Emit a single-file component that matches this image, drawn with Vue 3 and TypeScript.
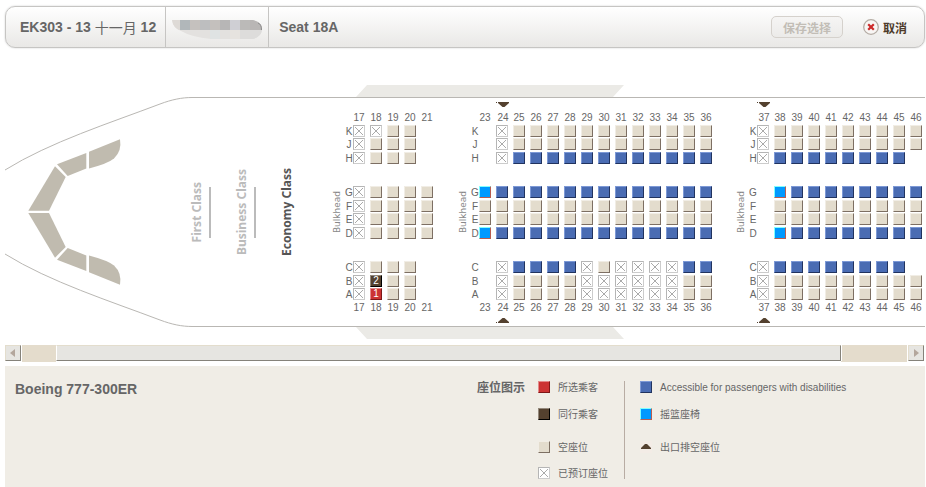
<script setup lang="ts">
import { ref } from 'vue'

type SeatKind = 'free' | 'booked' | 'accessible' | 'bassinet' | 'selected' | 'companion'

interface Deck {
  name: string
  first: number
  exits: number[]
  rows: Record<string, string>
}

const letters = ['K', 'J', 'H', '', 'G', 'F', 'E', 'D', '', 'C', 'B', 'A']

const decks: Deck[] = [
  {
    name: 'forward',
    first: 17,
    exits: [],
    rows: {
      K: 'xxoo.', J: 'xooo.', H: 'xooo.',
      G: 'xoooo', F: 'xoooo', E: 'xoooo', D: 'xoooo',
      C: 'xooo.', B: 'x2oo.', A: 'x1oo.',
    },
  },
  {
    name: 'middle',
    first: 23,
    exits: [24],
    rows: {
      K: '.xoooooooooooo', J: '.xoooooooooooo', H: '.xdddddddddddd',
      G: 'bddddddddddddd', F: 'oooooooooooooo', E: 'oooooooooooooo', D: 'bddddddddddddd',
      C: '.xddddxoxxxxdd', B: '.xooooxxxxxxoo', A: '.xooooxxxxxxoo',
    },
  },
  {
    name: 'aft',
    first: 37,
    exits: [37],
    rows: {
      K: 'xooooooooo', J: 'xooooooooo', H: 'xdddddddd.',
      G: '.bdddddddd', F: '.ooooooooo', E: '.ooooooooo', D: '.bdddddddd',
      C: 'xdddddddd.', B: 'xooooooooo', A: 'xooooooooo',
    },
  },
]

const kinds: Record<string, SeatKind> = {
  o: 'free', x: 'booked', d: 'accessible', b: 'bassinet', '1': 'selected', '2': 'companion',
}

function columns(deck: Deck) {
  return Array.from(deck.rows.K, (_, i) => ({
    number: deck.first + i,
    exit: deck.exits.includes(deck.first + i),
    seats: letters.map((letter) => {
      const code = letter ? deck.rows[letter][i] : '.'
      return { letter, kind: kinds[code], mark: code === '1' || code === '2' ? code : '' }
    }),
  }))
}

const plan = decks.map((deck) => ({ name: deck.name, columns: columns(deck) }))
const cabins = ['First Class', 'Business Class', 'Economy Class']
const cabin = ref('Economy Class')

const legend: { kind: SeatKind | 'exit'; text: string }[][] = [
  [
    { kind: 'selected', text: '所选乘客' },
    { kind: 'companion', text: '同行乘客' },
    { kind: 'free', text: '空座位' },
    { kind: 'booked', text: '已预订座位' },
  ],
  [
    { kind: 'accessible', text: 'Accessible for passengers with disabilities' },
    { kind: 'bassinet', text: '摇篮座椅' },
    { kind: 'exit', text: '出口排空座位' },
  ],
]
</script>

<template>
  <main class="page">
    <header class="bar">
      <div class="cell flight">EK303 - 13 <span class="month">十一月</span> 12</div>
      <div class="cell passenger">
        <svg width="92" height="22" viewBox="0 0 92 22" aria-hidden="true">
          <defs>
            <clipPath id="smudge">
              <path d="M1 1H82Q91 3 91 11Q90 18 82 20H40Q20 18 10 12Q2 9 1 1Z" />
            </clipPath>
          </defs>
          <g clip-path="url(#smudge)">
            <rect width="92" height="22" fill="#e3e1df" />
            <rect x="0" y="1" width="9" height="10" fill="#dedad6" />
            <rect x="9" y="1" width="10" height="10" fill="#b1b7ba" />
            <rect x="19" y="1" width="10" height="10" fill="#c5c1be" />
            <rect x="29" y="1" width="10" height="10" fill="#bdbebf" />
            <rect x="39" y="1" width="10" height="10" fill="#c4c0bd" />
            <rect x="49" y="1" width="10" height="10" fill="#b7b6b6" />
            <rect x="59" y="1" width="10" height="10" fill="#cfcfd4" />
            <rect x="69" y="1" width="10" height="10" fill="#bbbab8" />
            <rect x="79" y="1" width="13" height="10" fill="#b9b6b5" />
            <rect x="39" y="11" width="10" height="9" fill="#dfe3e3" />
            <rect x="59" y="11" width="10" height="9" fill="#e6e3df" />
            <rect x="69" y="11" width="22" height="9" fill="#dddcdb" />
          </g>
          <path d="M87 4Q90.500 5 90.500 11" fill="none" stroke="#8b8b8b" />
        </svg>
      </div>
      <div class="cell seat-name">Seat 18A</div>
      <div class="actions">
        <button class="save" type="button" disabled>保存选择</button>
        <button class="cancel" type="button">
          <svg width="16" height="16" viewBox="0 0 16 16" aria-hidden="true">
            <circle cx="8" cy="8" r="7.300" fill="#f8f6f4" stroke="#b5aca4" stroke-width="1.300" />
            <path d="M5.200 5.200L10.800 10.800M10.800 5.200L5.200 10.800" stroke="#cc2a2a" stroke-width="2.200" />
          </svg>
          取消
        </button>
      </div>
    </header>

    <section class="aircraft" aria-label="Seat map">
      <svg class="hull" aria-hidden="true">
        <path d="M362 0H619L608 12H351ZM351 242H608L619 254H362Z" fill="#ebeae6" />
        <path
          d="M0 85C45 57 105 38 155 19C167 14.500 177 12.500 187 12.500H4000M0 169C45 197 105 216 155 235C167 239.500 177 241.500 187 241.500H4000"
          fill="none"
          stroke="#b9b7b3"
        />
        <g fill="#c0bbaf">
          <path d="M50 81.300L60.700 92L44 125.700H23.300Z" />
          <path d="M52 79.300L81.300 68V83.500L62.700 91Z" />
          <path d="M84 66.700L115 54.300Q117 66 109 73.500Q103 78.500 84 83.500Z" />
          <path d="M50 172.700L60.700 162L44 128H23.300Z" />
          <path d="M52 174.700L81.300 186V170.500L62.700 163Z" />
          <path d="M84 187.300L115 199.700Q117 188 109 180.500Q103 175.500 84 170.500Z" />
        </g>
      </svg>

      <nav class="cabins">
        <template v-for="(name, i) in cabins" :key="name">
          <a href="#" :class="{ current: name === cabin }" @click.prevent="cabin = name">{{ name }}</a>
          <span v-if="i < cabins.length - 1" class="rule"></span>
        </template>
      </nav>

      <div v-for="deck in plan" :key="deck.name" class="deck" :class="deck.name">
        <span class="bulkhead">Bulkhead</span>
        <div class="column letters">
          <span></span><span></span>
          <span v-for="(letter, i) in letters" :key="i" class="letter">{{ letter }}</span>
        </div>
        <div v-for="column in deck.columns" :key="column.number" class="column">
          <span class="exit-slot">
            <svg v-if="column.exit" width="14" height="6" viewBox="0 0 14 6" aria-hidden="true">
              <path d="M2 0H13V1L8.500 5H6.500L2 1ZM0 0H1V1H0Z" fill="#54412f" />
            </svg>
          </span>
          <span class="number">{{ column.number }}</span>
          <template v-for="(seat, i) in column.seats" :key="i">
            <button
              v-if="seat.kind"
              type="button"
              class="seat"
              :class="seat.kind"
              :disabled="seat.kind === 'booked'"
              :aria-label="`${column.number}${seat.letter}`"
            >{{ seat.mark }}<svg v-if="seat.kind === 'booked'" width="10" height="10" viewBox="0 0 10 10"><path d="M1 1L9 9M9 1L1 9" stroke="#aaa" /></svg></button>
            <span v-else></span>
          </template>
          <span class="number">{{ column.number }}</span>
          <span class="exit-slot">
            <svg v-if="column.exit" width="14" height="6" viewBox="0 0 14 6" aria-hidden="true">
              <path d="M2 6H13V5L8.500 1H6.500L2 5ZM0 5H1V6H0Z" fill="#54412f" />
            </svg>
          </span>
        </div>
      </div>
    </section>

    <div class="scrollbar">
      <button type="button" aria-label="Scroll left">
        <svg width="6" height="8" viewBox="0 0 6 8"><path d="M5 0V8L0 4Z" fill="#b3a69c" /></svg>
      </button>
      <div class="track"><div class="thumb"></div></div>
      <button type="button" aria-label="Scroll right">
        <svg width="6" height="8" viewBox="0 0 6 8"><path d="M1 0V8L6 4Z" fill="#b3a69c" /></svg>
      </button>
    </div>

    <footer class="info">
      <h1>Boeing 777-300ER</h1>
      <div class="legend">
        <h2>座位图示</h2>
        <ul v-for="(group, g) in legend" :key="g">
          <li v-for="item in group" :key="item.text">
            <svg v-if="item.kind === 'exit'" class="exit" width="12" height="12" viewBox="0 0 12 12">
              <path d="M1 8V7L5 3H7L11 7V8Z" fill="#54412f" />
            </svg>
            <span v-else class="seat" :class="item.kind">
              <svg v-if="item.kind === 'booked'" width="10" height="10" viewBox="0 0 10 10"><path d="M1 1L9 9M9 1L1 9" stroke="#aaa" /></svg>
            </span>
            {{ item.text }}
          </li>
        </ul>
      </div>
    </footer>
  </main>
</template>

<style>
body {
  background: #fff;
}
</style>

<style scoped>
.page {
  padding: 6px 1px 0 5px;
  font-family: 'Liberation Sans', 'Noto Sans CJK SC', sans-serif;
  color: #666;
}

button {
  margin: 0;
  padding: 0;
  font-family: inherit;
  cursor: pointer;
}

.bar {
  display: flex;
  height: 42px;
  box-sizing: border-box;
  border: 1px solid #c6c5c3;
  border-radius: 10px;
  background: linear-gradient(#fff, #e9e8e6);
  box-shadow: 0 0 2px #ccc;
  font-size: 14px;
  font-weight: bold;
}

.cell {
  display: flex;
  align-items: center;
  white-space: pre;
}

.flight {
  padding: 0 9px 0 14px;
  border-right: 1px solid #c6c5c3;
}

.month {
  font-weight: normal;
}

.passenger {
  padding: 6px 5px 0;
  border-right: 1px solid #c6c5c3;
}

.seat-name {
  padding-left: 10px;
}

.actions {
  display: flex;
  align-items: center;
  gap: 20px;
  margin-left: auto;
  padding-right: 17px;
}

.save {
  height: 22px;
  padding: 0 11px;
  border: 1px solid #d5d1cc;
  border-radius: 5px;
  background: linear-gradient(#f6f5f4, #ecebe9);
  color: #c2bdb6;
  font-size: 12px;
  font-weight: bold;
}

.cancel {
  display: flex;
  align-items: center;
  gap: 4px;
  border: 0;
  background: none;
  color: #4d3b2b;
  font-size: 12px;
  font-weight: bold;
}

.aircraft {
  position: relative;
  display: flex;
  align-items: flex-start;
  margin-top: 37px;
  padding: 14px 0;
  overflow: hidden;
}

.hull {
  position: absolute;
  top: 0;
  left: 0;
  width: 100%;
  height: 100%;
}

.cabins {
  position: relative;
  display: grid;
  grid-template-columns: 16px 21px 16px 21px 16px;
  column-gap: 4px;
  flex: none;
  align-items: center;
  align-self: center;
  margin-left: 184px;
}

.cabins a {
  writing-mode: vertical-rl;
  transform: rotate(180deg);
  justify-self: center;
  line-height: 16px;
  text-align: center;
  white-space: nowrap;
  color: #bbb;
  font-family: 'Noto Sans', sans-serif;
  font-size: 12px;
  font-weight: bold;
  text-decoration: none;
}

.cabins a.current {
  color: #555;
}

.rule {
  width: 2px;
  height: 51px;
  background: #bbb;
}

.deck {
  position: relative;
  display: flex;
  flex: none;
}

.forward {
  margin-left: 36px;
}

.middle {
  margin-left: 24px;
}

.aft {
  margin-left: 23px;
}

.bulkhead {
  align-self: center;
  width: 12px;
  margin-right: 2px;
  writing-mode: vertical-rl;
  transform: rotate(180deg);
  line-height: 12px;
  color: #888;
  font-family: 'DejaVu Sans', sans-serif;
  font-size: 9px;
}

.column {
  display: grid;
  grid-template-rows: 11px 15px 13px 14px 14px 20px 14px 13px 14px 14px 20px 14px 13px 13px 13px 11px;
  width: 12px;
  align-items: start;
}

.column + .column + .column {
  margin-left: 5px;
}

.letters {
  width: 8px;
}

.letter,
.number {
  font-size: 10px;
  line-height: 13px;
}

.letter {
  text-align: center;
}

.number {
  align-self: center;
  text-align: center;
}

.exit-slot {
  display: flex;
  justify-content: center;
  align-self: center;
}

.exit-slot svg {
  flex: none;
}

.seat {
  display: flex;
  align-items: center;
  justify-content: center;
  flex: none;
  width: 12px;
  height: 12px;
  box-sizing: border-box;
  border: 1px solid;
  color: #fff;
  font-size: 10px;
  line-height: 10px;
}

.seat svg {
  flex: none;
}

.free {
  border-color: #f1ede5 #7d6f63 #7d6f63 #f1ede5;
  background: #e3dccd;
}

.booked {
  border-color: #b5b5b5 #ccc #ccc #b5b5b5;
  background: #fff;
}

.accessible {
  border-color: #7d99d6 #21335f #21335f #7d99d6;
  background: #4a6cb3;
}

.bassinet {
  border-color: #80ffff #b85c50 #b85c50 #80ffff;
  background: #09f;
}

.selected {
  border-color: #e38b8b #7d1717 #7d1717 #e38b8b;
  background: #c33;
}

.companion {
  border-color: #94897c #000 #000 #94897c;
  background: #54412f;
}

.scrollbar {
  display: flex;
  gap: 1px;
  height: 17px;
  margin-top: 6px;
  padding-right: 1px;
}

.scrollbar button {
  display: flex;
  align-items: center;
  justify-content: center;
  width: 16px;
  height: 16px;
  border: 1px solid;
  border-color: #e3ddcd #85827a #85827a #e3ddcd;
  background: #e6e5e1;
}

.track {
  display: flex;
  flex: 1;
  background: #e4dccc;
}

.track::before {
  content: '';
  flex: 34;
}

.track::after {
  content: '';
  flex: 66;
}

.thumb {
  flex: 785;
  height: 16px;
  box-sizing: border-box;
  border: 1px solid;
  border-color: #e3ddcd #85827a #85827a #fff;
  background: #e6e5e1;
  box-shadow: 0 1px #fff, 1px 0 #fff;
}

.info {
  display: grid;
  grid-template-columns: minmax(150px, 462px) 1fr;
  margin-top: 4px;
  padding: 15px 10px 8px;
  background: #f0ede6;
}

h1,
h2 {
  margin: 0;
}

h1 {
  font-size: 14px;
  line-height: 16px;
}

.legend {
  display: flex;
}

h2 {
  width: 61px;
  font-size: 12px;
  line-height: 14px;
}

ul {
  display: grid;
  grid-template-rows: 27px 33px 26px 12px;
  margin: 0;
  padding: 0;
  list-style: none;
}

ul + ul {
  margin-left: 16px;
  padding-left: 15px;
  border-left: 1px solid #b8aca3;
}

li {
  display: flex;
  gap: 8px;
  height: 12px;
  font-size: 10px;
  line-height: 14px;
  white-space: nowrap;
}

.exit {
  background: #f3ece6;
}
</style>
